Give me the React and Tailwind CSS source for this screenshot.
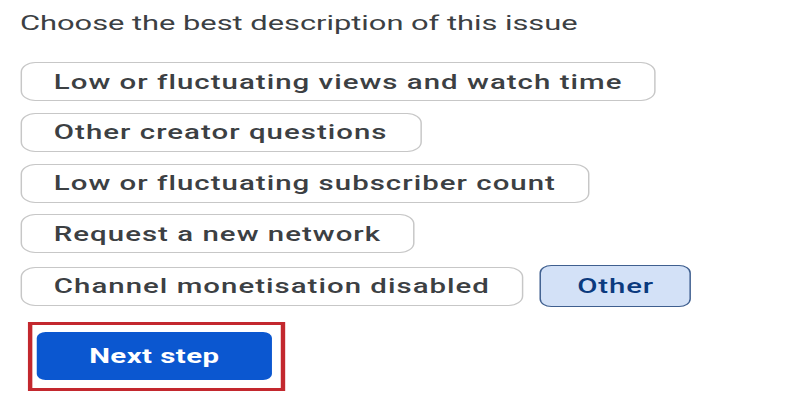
import React from "react";

const Opt = ({ children }) => (
  <div className="h-[39px] flex items-center px-[22px] border border-[#c7c7c7] rounded-[10px] text-[20px] text-[#3c4043] font-medium tracking-[0.7px] whitespace-nowrap">
    {children}
  </div>
);

export default function App() {
  return (
    <div className="w-[800px] h-[400px] bg-white overflow-hidden" style={{ fontFamily: "Roboto, 'Liberation Sans', sans-serif" }}>
      <div className="origin-top-left scale-x-[1.47] pl-[13.6px] pt-[10px] flex flex-col items-start">
        <div className="text-[21px] leading-[26px] text-[#3c4043] tracking-[-0.02px] whitespace-nowrap">
          Choose the best description of this issue
        </div>
        <div className="mt-[26px] flex flex-col items-start gap-[11.75px]">
          <Opt>Low or fluctuating views and watch time</Opt>
          <Opt>Other creator questions</Opt>
          <Opt>Low or fluctuating subscriber count</Opt>
          <Opt>Request a new network</Opt>
          <div className="flex items-center gap-[11px]">
            <Opt>Channel monetisation disabled</Opt>
            <div className="h-[42px] w-[103px] flex items-center justify-center border border-[#3f5f8f] rounded-[8px] bg-[#d3e1f7] text-[20px] text-[#0b3a7e] font-medium tracking-[0.6px]">
              Other
            </div>
          </div>
        </div>
        <div className="mt-[15px] ml-[5.4px] border-[3px] border-[#c3282e] pl-[3px] pr-[6px] pt-[7px] pb-[8px]">
          <div className="w-[160px] h-[48px] rounded-[6px] bg-[#0b57d0] flex items-center justify-center text-white text-[20px] font-bold tracking-[0.3px]">
            Next step
          </div>
        </div>
      </div>
    </div>
  );
}
